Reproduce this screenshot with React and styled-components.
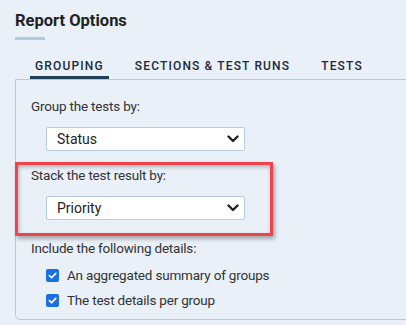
import React from "react"
import styled, { createGlobalStyle } from "styled-components"

const GlobalStyle = createGlobalStyle`
  html, body {
    margin: 0;
    padding: 0;
    background: #e9f0f8;
    font-family: Roboto, "Liberation Sans", sans-serif;
    color: #2e2e2e;
    overflow: hidden;
  }
`

const tabs = [
  { id: 0, label: "Grouping", active: true },
  { id: 1, label: "Sections & Test Runs" },
  { id: 2, label: "Tests" },
]

const details = [
  { id: 0, label: "An aggregated summary of groups" },
  { id: 1, label: "The test details per group" },
]

const Chevron = () => (
  <svg width="12" height="8" viewBox="0 0 12 8">
    <polyline
      points="1.5,1.5 6,6 10.5,1.5"
      fill="none"
      stroke="#222"
      strokeWidth="2.4"
      strokeLinecap="round"
      strokeLinejoin="round"
    />
  </svg>
)

const Check = () => (
  <svg width="9" height="9" viewBox="0 0 10 10">
    <polyline
      points="1.6,5.2 4,7.5 8.6,2.6"
      fill="none"
      stroke="#fff"
      strokeWidth="1.9"
      strokeLinecap="round"
      strokeLinejoin="round"
    />
  </svg>
)

const Select = ({ value }) => (
  <SelectBox>
    <span>{value}</span>
    <Chevron />
  </SelectBox>
)

const App = () => {
  return (
    <Page>
      <GlobalStyle />
      <Title>Report Options</Title>
      <TitleBar />
      <TabRow>
        {tabs.map(tab => (
          <Tab key={tab.id} active={tab.active}>
            {tab.label}
          </Tab>
        ))}
      </TabRow>
      <Panel>
        <Label>Group the tests by:</Label>
        <Select value="Status" />
        <Label spaced>Stack the test result by:</Label>
        <Select value="Priority" />
        <Label spaced wide>Include the following details:</Label>
        <CheckList>
          {details.map(item => (
            <CheckRow key={item.id}>
              <CheckBox>
                <Check />
              </CheckBox>
              {item.label}
            </CheckRow>
          ))}
        </CheckList>
      </Panel>
      <Highlight />
    </Page>
  )
}

const Page = styled.div`
  position: relative;
  padding: 10px 0 0 15px;
  height: 325px;
  box-sizing: border-box;
`

const Title = styled.h1`
  margin: 0;
  font-size: 16.5px;
  line-height: 22px;
  font-weight: 700;
  color: #222;
`

const TitleBar = styled.div`
  width: 30px;
  height: 3px;
  margin-top: 5px;
  background: #b1c9dd;
`

const TabRow = styled.div`
  display: flex;
  gap: 21px;
  margin-top: 15px;
  padding-left: 15px;
`

const Tab = styled.div`
  padding: 0 5px;
  height: 24px;
  box-sizing: border-box;
  display: flex;
  align-items: center;
  font-size: 12px;
  font-weight: 500;
  letter-spacing: 1.15px;
  text-transform: uppercase;
  color: #1e2a36;
  border-bottom: 3px solid ${p => (p.active ? "#1f3f57" : "transparent")};
`

const Panel = styled.div`
  display: flex;
  flex-direction: column;
  align-items: flex-start;
  margin-right: -10px;
  padding: 17px 15px 10px;
  box-sizing: border-box;
  border: 1px solid #b3cbe0;
  border-radius: 0 0 0 5px;
  & > * {
    flex-shrink: 0;
  }
`

const Label = styled.div`
  font-size: 13.5px;
  line-height: 18px;
  letter-spacing: -0.2px;
  color: #333;
  margin-top: ${p => (p.wide ? "19px" : p.spaced ? "15px" : "0")};
  margin-bottom: 12px;
`

const SelectBox = styled.div`
  display: flex;
  align-items: center;
  justify-content: space-between;
  margin-left: 15px;
  width: 199px;
  height: 24px;
  box-sizing: border-box;
  padding: 0 5px 0 10px;
  background: #fff;
  border: 1px solid #b5cbe0;
  border-radius: 2px;
  font-size: 14px;
  color: #222;
`

const CheckList = styled.div`
  display: flex;
  flex-direction: column;
  gap: 7px;
  margin-left: 15px;
  margin-top: -3px;
`

const CheckRow = styled.div`
  display: flex;
  align-items: center;
  gap: 8px;
  height: 18px;
  font-size: 13.5px;
  letter-spacing: -0.2px;
  color: #333;
`

const CheckBox = styled.span`
  display: flex;
  align-items: center;
  justify-content: center;
  width: 13px;
  height: 13px;
  border-radius: 2px;
  background: #1a6fe3;
`

const Highlight = styled.div`
  position: absolute;
  left: 15px;
  top: 162px;
  width: 258px;
  height: 74px;
  box-sizing: border-box;
  border: 3px solid #f2434b;
  box-shadow: 2px 3px 4px rgba(0, 0, 0, 0.3),
    inset 1px 2px 4px rgba(0, 0, 0, 0.25);
  pointer-events: none;
`

export default App
